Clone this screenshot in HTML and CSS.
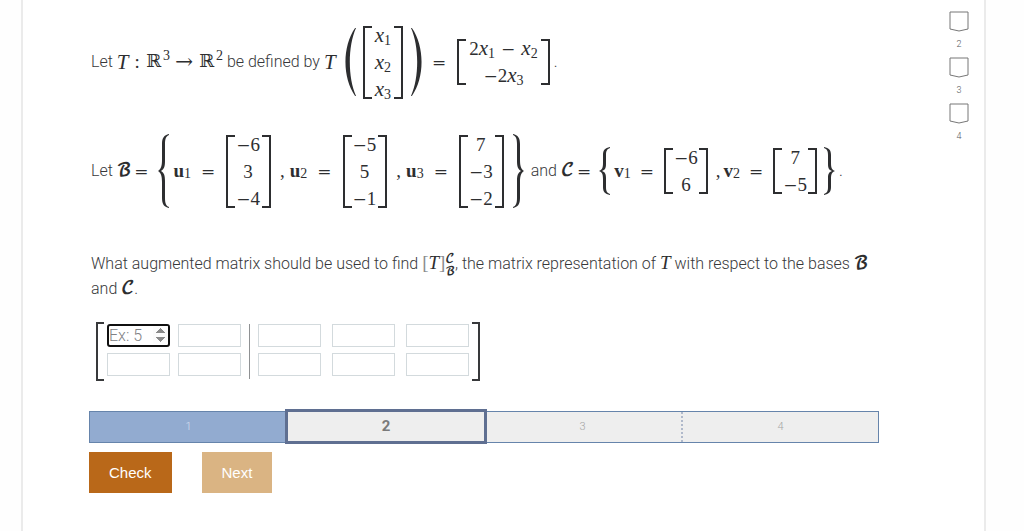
FILE: index.html
```html
<!DOCTYPE html>
<html lang="en">
  <head>
    <meta charset="UTF-8" />
    <meta name="viewport" content="width=device-width, initial-scale=1.0" />
    <title>Matrix representation</title>
    <link rel="stylesheet" href="styles.css">
  </head>

  <body>
    <div class="page">
      <main class="question">
        <!-- definition of T -->
        <p class="row">
          <span>Let</span>
          <span class="math gap"><i>T</i><span class="colon">:</span><span class="bb">ℝ</span><sup>3</sup><span class="arrow">→</span><span class="bb">ℝ</span><sup>2</sup></span>
          <span class="gap">be defined by</span>
          <span class="math gap"><i>T</i>
            <svg class="fence paren" viewBox="0 0 12 74"><path d="M11 0C-3 20-3 54 11 74L12 74C3 54 3 20 12 0Z"/></svg>
            <span class="matrix wide">
              <span><i>x</i><sub>1</sub></span>
              <span><i>x</i><sub>2</sub></span>
              <span><i>x</i><sub>3</sub></span>
            </span>
            <svg class="fence paren close" viewBox="0 0 12 74"><path d="M11 0C-3 20-3 54 11 74L12 74C3 54 3 20 12 0Z"/></svg>
            <span class="op rel">=</span>
            <span class="matrix wide">
              <span>2<i>x</i><sub>1</sub><span class="op bin">−</span><i>x</i><sub>2</sub></span>
              <span><span class="op">−</span>2<i>x</i><sub>3</sub></span>
            </span>
          </span>
          <span class="gap">.</span>
        </p>

        <!-- the two bases -->
        <p class="row bases">
          <span>Let</span>
          <span class="math gap name"><span class="cal">ℬ</span><span class="op">=</span></span>
          <span class="math set">
            <svg class="fence brace" viewBox="0 0 11 74"><path d="M11 0C6 1 4 4 4 10V26C4 32 3 35 0 37C3 39 4 42 4 48V64C4 70 6 73 11 74V73C8 72 7 69 7 64V47C7 41 6 39 3 37C6 35 7 33 7 27V10C7 5 8 2 11 1Z"/></svg>
            <b>u</b><sub>1</sub><span class="op rel">=</span>
            <span class="matrix">
              <span><span class="op">−</span>6</span>
              <span>3</span>
              <span><span class="op">−</span>4</span>
            </span>
            <span class="comma">,</span><b>u</b><sub>2</sub><span class="op rel">=</span>
            <span class="matrix">
              <span><span class="op">−</span>5</span>
              <span>5</span>
              <span><span class="op">−</span>1</span>
            </span>
            <span class="comma">,</span><b>u</b><sub>3</sub><span class="op rel">=</span>
            <span class="matrix">
              <span>7</span>
              <span><span class="op">−</span>3</span>
              <span><span class="op">−</span>2</span>
            </span>
            <svg class="fence brace close" viewBox="0 0 11 74"><path d="M11 0C6 1 4 4 4 10V26C4 32 3 35 0 37C3 39 4 42 4 48V64C4 70 6 73 11 74V73C8 72 7 69 7 64V47C7 41 6 39 3 37C6 35 7 33 7 27V10C7 5 8 2 11 1Z"/></svg>
          </span>
          <span class="and">and</span>
          <span class="math gap name"><span class="cal">𝒞</span><span class="op">=</span></span>
          <span class="math set small">
            <svg class="fence brace" viewBox="0 0 11 48"><path d="M11 0C6 1 4 3 4 8V16C4 21 3 23 0 24C3 25 4 27 4 32V40C4 45 6 47 11 48V47C8 46 7 44 7 40V31C7 27 6 25 3 24C6 23 7 21 7 17V8C7 4 8 2 11 1Z"/></svg>
            <b>v</b><sub>1</sub><span class="op rel">=</span>
            <span class="matrix">
              <span><span class="op">−</span>6</span>
              <span>6</span>
            </span>
            <span class="comma">,</span><b>v</b><sub>2</sub><span class="op rel">=</span>
            <span class="matrix">
              <span>7</span>
              <span><span class="op">−</span>5</span>
            </span>
            <svg class="fence brace close" viewBox="0 0 11 48"><path d="M11 0C6 1 4 3 4 8V16C4 21 3 23 0 24C3 25 4 27 4 32V40C4 45 6 47 11 48V47C8 46 7 44 7 40V31C7 27 6 25 3 24C6 23 7 21 7 17V8C7 4 8 2 11 1Z"/></svg>
          </span>
          <span class="gap">.</span>
        </p>

        <p class="ask">What augmented matrix should be used to find <span class="math"><span class="bracket">[</span><i>T</i><span class="bracket">]</span><span class="scripts"><span class="cal">𝒞</span><span class="cal">ℬ</span></span></span>, the matrix representation of <span class="math"><i>T</i></span> with respect to the bases <span class="math cal">ℬ</span> and <span class="math cal">𝒞</span>.</p>

        <!-- answer matrix -->
        <form class="answer">
          <div class="cells left">
            <input class="active" type="number" placeholder="Ex: 5" aria-label="Row 1 column 1">
            <input type="number" aria-label="Row 1 column 2">
            <input type="number" aria-label="Row 2 column 1">
            <input type="number" aria-label="Row 2 column 2">
          </div>
          <div class="cells right">
            <input type="number" aria-label="Row 1 column 3">
            <input type="number" aria-label="Row 1 column 4">
            <input type="number" aria-label="Row 1 column 5">
            <input type="number" aria-label="Row 2 column 3">
            <input type="number" aria-label="Row 2 column 4">
            <input type="number" aria-label="Row 2 column 5">
          </div>
        </form>

        <ol class="steps">
          <li class="done">1</li>
          <li class="current">2</li>
          <li>3</li>
          <li>4</li>
        </ol>

        <div class="buttons">
          <button class="btn" type="button">Check</button>
          <button class="btn next" type="button" disabled>Next</button>
        </div>
      </main>

      <!-- level markers -->
      <aside class="levels">
        <div class="level">
          <svg viewBox="0 0 20 21"><path d="M1 1H19V18L10 20L1 18Z"/></svg>
          <span>2</span>
        </div>
        <div class="level">
          <svg viewBox="0 0 20 21"><path d="M1 1H19V18L10 20L1 18Z"/></svg>
          <span>3</span>
        </div>
        <div class="level">
          <svg viewBox="0 0 20 21"><path d="M1 1H19V18L10 20L1 18Z"/></svg>
          <span>4</span>
        </div>
      </aside>
    </div>
  </body>
</html>
```
FILE: styles.css
```css
* {
  box-sizing: border-box;
}

body {
  margin: 0;
  background-color: #fefefe;
  color: #37383a;
  font: 300 16px/24px Roboto, "Liberation Sans", sans-serif;
}

.page {
  display: flex;
  min-height: 100vh;
  margin: 0 38px 0 21px;
  background-color: #fff;
  border: solid #ebebeb;
  border-width: 0 2px;
}

.question {
  flex: 1;
  min-width: 0;
  padding: 25px 66px 0;
}

.question p {
  margin: 0;
  padding-left: 2px;
}

.row {
  display: flex;
  align-items: center;
  height: 74px;
  white-space: nowrap;
}

.question .bases {
  margin-top: 35px;
}

.gap {
  margin-left: 4px;
}

.and {
  margin-left: 7px;
}

/* math */
.math {
  font-family: "Liberation Serif", "DejaVu Math TeX Gyre", serif;
  font-size: 19px;
  font-weight: 400;
  color: #2d2e30;
}

.row .math {
  display: flex;
  align-items: center;
}

.row i {
  font-size: 21px;
}

.math sub,
.math sup {
  font-size: 14px;
  line-height: 14px;
  vertical-align: baseline;
  position: relative;
  top: 3px;
}

.math sup {
  top: -6px;
}

.colon {
  margin: 0 6px;
}

.bb,
.cal {
  font-family: "DejaVu Math TeX Gyre", "DejaVu Serif", serif;
  font-size: 18px;
  line-height: 24px;
}

.math .cal,
.math.cal {
  font-weight: 700;
}

.arrow {
  margin: 0 5px;
  font-family: "DejaVu Math TeX Gyre", "DejaVu Serif", serif;
}

.op {
  font-family: "DejaVu Serif", serif;
  font-size: 17px;
}

.name {
  gap: 3px;
}

.rel {
  margin: 0 11px 0 10px;
}

.small .rel {
  margin: 0 10px 0 9px;
}

.bin {
  margin: 0 6px;
}

.comma {
  margin: 0 5px 0 9px;
}

.small .comma {
  margin: 0 3px 0 8px;
}

.fence {
  flex: none;
  width: 11px;
  height: 74px;
  fill: #2d2e30;
}

.small .fence {
  height: 48px;
}

.close {
  transform: scaleX(-1);
}

.paren {
  margin: 0 7px 0 9px;
}

.paren.close {
  margin: 0 0 0 8px;
}

.set .brace {
  margin: 0 4px 0 10px;
}

.set .close {
  margin: 0 0 0 9px;
}

.small .brace {
  margin: 0 4px 0 8px;
}

.small .close {
  margin: 0 0 0 7px;
}

.matrix {
  display: grid;
  grid-auto-rows: 27px;
  align-content: center;
  justify-items: center;
  line-height: 27px;
  padding: 0 11px 0 10px;
  margin: -4px 0;
  position: relative;
}

.wide {
  padding: 0 12px;
}

.small .matrix {
  padding: 0 10px;
}

.matrix::before,
.matrix::after {
  content: "";
  position: absolute;
  top: 4px;
  bottom: 4px;
  width: 7px;
  border: 2px solid #2d2e30;
}

.matrix::before {
  left: 0;
  border-right: 0;
}

.matrix::after {
  right: 0;
  border-left: 0;
}

.question .ask {
  margin-top: 44px;
}

.ask .math {
  line-height: 20px;
}

.bracket {
  color: #8a8b8d;
}

.scripts {
  display: inline-grid;
  vertical-align: middle;
}

.scripts .cal {
  font-size: 12px;
  line-height: 12px;
}

/* answer matrix */
.answer {
  display: flex;
  width: fit-content;
  margin: 21px 0 0 7px;
  padding: 2px 11px;
  position: relative;
}

.answer::before,
.answer::after {
  content: "";
  position: absolute;
  top: 0;
  bottom: 0;
  width: 6px;
  border: 2px solid #38393b;
}

.answer::before {
  left: 0;
  border-right: 0;
}

.answer::after {
  right: 0;
  border-left: 0;
}

.cells {
  display: grid;
  gap: 6px 11px;
  padding-bottom: 3px;
}

.left {
  grid-template-columns: 63px 63px;
  column-gap: 8px;
  padding-right: 8px;
  border-right: 1px solid #8f9193;
}

.right {
  grid-template-columns: 63px 63px 63px;
  padding-left: 8px;
}

.cells input {
  width: 100%;
  height: 23px;
  padding: 0 2px;
  border: 1px solid #d3dadd;
  background-color: #fff;
  font: inherit;
  line-height: 19px;
  color: inherit;
}

.cells .active {
  border: 2px solid #101010;
  border-radius: 3px;
  padding: 0;
}

.active::placeholder {
  color: #808184;
}

.active::-webkit-inner-spin-button {
  opacity: 1;
  height: 19px;
}

/* progress bar */
.steps {
  display: grid;
  grid-template-columns: repeat(4, 1fr);
  height: 32px;
  margin: 30px 0 0;
  padding: 0;
  list-style: none;
  border: 1px solid #6684ab;
  background-color: #eee;
  color: #a5a5a5;
  font-size: 11px;
  line-height: 30px;
  text-align: center;
}

.steps li + li {
  border-left: 2px dotted #b0b9cb;
}

.steps .done {
  background-color: #92abd0;
  color: #d2deef;
}

.steps .current {
  margin: -3px -3px -2px -2px;
  border: 3px solid #5f6f91;
  background-color: #eee;
  color: #7a7a7a;
  font-size: 15px;
  line-height: 29px;
  font-weight: 700;
}

.steps .current + li {
  border-left: 0;
}

.buttons {
  display: flex;
  gap: 30px;
  margin-top: 9px;
}

.btn {
  height: 41px;
  padding: 0 20px;
  border: 0;
  background-color: #b96819;
  color: #fff;
  font: 15px "Liberation Sans", Arial, sans-serif;
}

.next {
  background-color: #dab483;
}

/* level markers */
.levels {
  flex: none;
  width: 39px;
  padding-top: 11px;
}

.level {
  display: flex;
  flex-direction: column;
  align-items: center;
  width: 28px;
  height: 46px;
  color: #55585c;
  font-size: 9px;
}

.level svg {
  width: 20px;
  height: 21px;
  fill: #fff;
  stroke: #777;
}
```
